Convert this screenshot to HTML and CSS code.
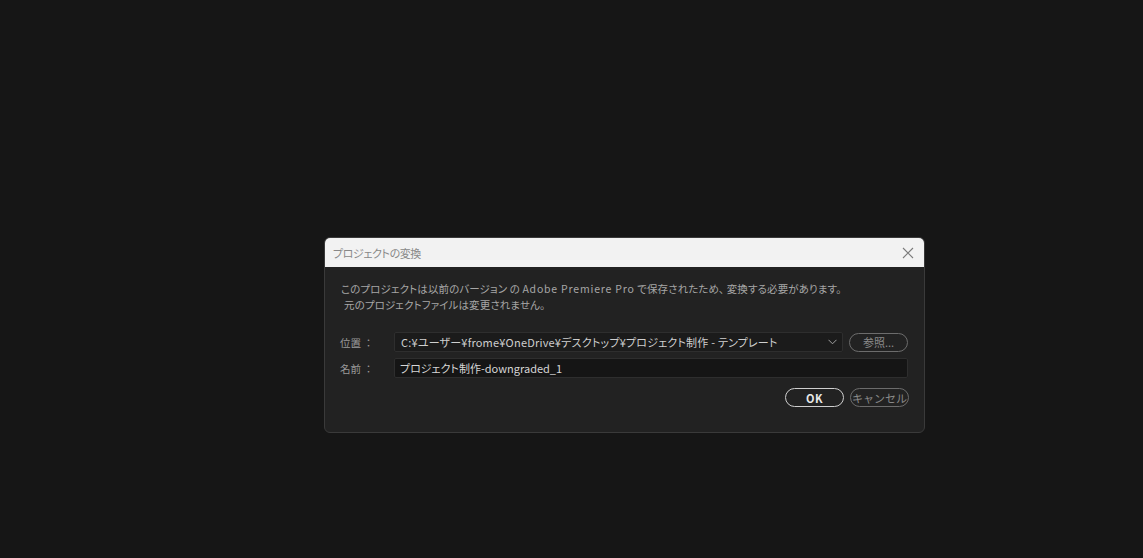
FILE: index.html
```html
<!DOCTYPE html>
<html lang="ja">
<head>
<meta charset="utf-8">
<title>プロジェクトの変換</title>
<link rel="stylesheet" href="styles.css">
</head>
<body>
<div class="dialog">
  <div class="titlebar">
    <span class="title">プロジェクトの変換</span>
    <svg class="close" width="12" height="12" viewBox="0 0 12 12"><path d="M1 1L11 11M11 1L1 11" stroke="#7c7c7c" stroke-width="1.1" fill="none"/></svg>
  </div>
  <div class="content">
    <div class="msg">
      <div>このプロジェクトは以前のバージョン の <span class="lat">Adobe Premiere Pro</span> で保存されたため、 変換する必要があります。</div>
      <div class="indent">元のプロジェクトファイルは変更されません。</div>
    </div>
    <div class="form">
      <div class="row">
        <span class="label">位置 ：</span>
        <div class="select">
          <span class="val">C:¥ユーザー¥frome¥OneDrive¥デスクトップ¥プロジェクト制作 - テンプレート</span>
          <svg class="chev" width="9" height="6" viewBox="0 0 9 6"><path d="M0.5 0.8L4.5 4.8L8.5 0.8" stroke="#a0a0a0" stroke-width="1" fill="none"/></svg>
        </div>
        <button class="btn dim">参照...</button>
      </div>
      <div class="row">
        <span class="label">名前 ：</span>
        <div class="input">プロジェクト制作-downgraded_1</div>
      </div>
      <div class="actions">
        <button class="btn primary">OK</button>
        <button class="btn dim">キャンセル</button>
      </div>
    </div>
  </div>
</div>
</body>
</html>
```
FILE: styles.css
```css
html, body {
  margin: 0;
  padding: 0;
  background: #161616;
}
body {
  width: 1143px;
  height: 558px;
  padding: 237px 0 0 324px;
  box-sizing: border-box;
  font-family: "Noto Sans CJK JP", "Noto Sans", sans-serif;
  font-feature-settings: "palt";
}
.dialog {
  width: 601px;
  height: 196px;
  box-sizing: border-box;
  border: 1px solid #3a3a3a;
  border-radius: 6px;
  overflow: hidden;
  background: #222222;
  display: flex;
  flex-direction: column;
}
.titlebar {
  height: 29px;
  flex: none;
  background: #f2f2f2;
  display: flex;
  align-items: center;
  justify-content: space-between;
  padding: 0 10px 0 8px;
}
.title {
  font-size: 11px;
  color: #888888;
  letter-spacing: -0.4px;
}
.close { display: block; }
.content {
  padding: 14px 15px 0 15px;
  color: #a6a6a6;
}
.msg {
  font-size: 10.5px;
  line-height: 16px;
  padding-left: 1px;
  letter-spacing: 0.1px;
}
.msg .lat { letter-spacing: 0.8px; }
.indent { padding-left: 3px; }
.form {
  margin-top: 19px;
  display: flex;
  flex-direction: column;
  gap: 6px;
}
.row {
  display: flex;
  align-items: center;
  gap: 6px;
}
.label {
  width: 48px;
  font-size: 10.5px;
  color: #9a9a9a;
  font-feature-settings: normal;
  white-space: nowrap;
}
.select {
  width: 449px;
  height: 20px;
  box-sizing: border-box;
  background: #1b1b1b;
  border: 1px solid #2e2e2e;
  border-radius: 2px;
  display: flex;
  align-items: center;
  justify-content: space-between;
  padding: 0 5px 0 6px;
  font-size: 11px;
  letter-spacing: 0.2px;
  color: #cfcfcf;
}
.input {
  width: 514px;
  height: 20px;
  box-sizing: border-box;
  background: #151515;
  border: 1px solid #2e2e2e;
  border-radius: 2px;
  display: flex;
  align-items: center;
  padding: 0 5px;
  font-size: 11px;
  color: #d6d6d6;
}
.btn {
  width: 59px;
  height: 19px;
  box-sizing: border-box;
  border-radius: 10px;
  background: transparent;
  font-family: inherit;
  font-size: 11px;
  padding: 0;
  display: flex;
  align-items: center;
  justify-content: center;
}
.btn.dim {
  border: 1px solid #6c6c6c;
  color: #8a8a8a;
}
.btn.primary {
  border: 1px solid #cfcfcf;
  color: #e8e8e8;
  font-weight: 600;
  letter-spacing: 0.6px;
}
.actions {
  margin-top: 4px;
  display: flex;
  justify-content: flex-end;
  gap: 6px;
}
```
